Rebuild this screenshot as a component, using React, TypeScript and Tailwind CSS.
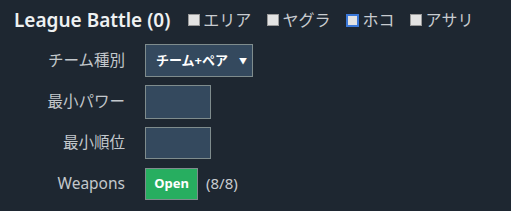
import { useState } from "react";

const RULES = ["エリア", "ヤグラ", "ホコ", "アサリ"];

function Row({ label, children }: { label: string; children: React.ReactNode }) {
  return (
    <div className="flex items-center h-[33px]">
      <label className="w-[125px] text-right text-[15.5px] text-[#c3c8cc]">{label}</label>
      <div className="ml-[20px] flex items-center">{children}</div>
    </div>
  );
}

export default function App() {
  const [team, setTeam] = useState("チーム+ペア");
  const [power, setPower] = useState("");
  const [rank, setRank] = useState("");

  return (
    <div
      className="w-[511px] h-[211px] bg-[#1e2731] text-[#ecf0f1] overflow-hidden"
      style={{ fontFamily: '"Noto Sans", "Noto Sans CJK JP", sans-serif' }}
    >
      <div className="flex items-center h-[40px] pl-[14px]">
        <h2 className="text-[19px] font-semibold text-[#eef1f2]">League Battle (0)</h2>
        <div className="flex items-center ml-[18px] gap-[16px] text-[16px] text-[#c8ccd0]">
          {RULES.map((r) => (
            <label key={r} className="flex items-center gap-[3px]">
              <span
                className={
                  "w-[12px] h-[12px] bg-[#e3e3e3] border " +
                  (r === "ホコ" ? "border-[#3b78d8] border-2 w-[13px] h-[13px]" : "border-[#9a9a9a]")
                }
              />
              {r}
            </label>
          ))}
        </div>
      </div>

      <div className="flex flex-col gap-[8px] mt-[4px]">
        <Row label="チーム種別">
          <div className="relative w-[108px] h-[33px] bg-[#34495e] border border-[#7f8c8d] flex items-center pl-[10px] text-[13px] font-bold text-white">
            <span>{team}</span>
            <span className="absolute right-[5px] top-[10px] text-[8px]">▼</span>
            <select
              value={team}
              onChange={(e) => setTeam(e.target.value)}
              className="absolute inset-0 opacity-0"
            >
              <option>チーム+ペア</option>
              <option>チーム</option>
              <option>ペア</option>
            </select>
          </div>
        </Row>
        <Row label="最小パワー">
          <input
            value={power}
            onChange={(e) => setPower(e.target.value)}
            className="w-[66px] h-[34px] bg-[#34495e] border border-[#7f8c8d] outline-none text-white px-2"
          />
        </Row>
        <Row label="最小順位">
          <input
            value={rank}
            onChange={(e) => setRank(e.target.value)}
            className="w-[66px] h-[32px] bg-[#34495e] border border-[#7f8c8d] outline-none text-white px-2"
          />
        </Row>
        <Row label="Weapons">
          <button className="w-[53px] h-[32px] bg-[#27ae60] border border-[#7f8c8d] text-[13px] font-bold text-white">
            Open
          </button>
          <span className="ml-[8px] text-[15px] text-[#c8ccd0]">(8/8)</span>
        </Row>
      </div>
    </div>
  );
}
